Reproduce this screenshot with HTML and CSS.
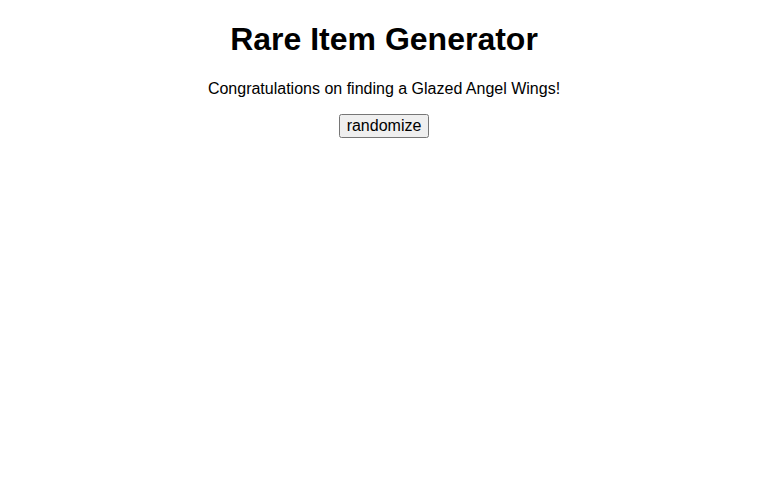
FILE: index.html
```html
<!DOCTYPE html>
<html lang="en">
<head>
  <meta charset="UTF-8" />
  <title>Rare Item Generator</title>
  <link rel="stylesheet" href="styles.css">
  <script src="script.js" defer></script>
</head>
<body>
  <h1>Rare Item Generator</h1>
  <p>Congratulations on finding a <span id="item">Glazed Angel Wings</span>!</p>
  <button id="randomize">randomize</button>
</body>
</html>
```

FILE: styles.css
```css
body {
  font-family: "Liberation Sans", Arial, sans-serif;
  text-align: center;
  color: #000;
  background: #fff;
  margin: 0;
  padding: 0 8px 8px;
}

h1 {
  font-size: 32px;
  margin: 21px 0 22px;
}

p {
  margin: 16px 0;
}

button {
  font-family: "Liberation Sans", Arial, sans-serif;
  font-size: 16px;
}
```

FILE: script.js
```js
const adjectives = ['Glazed', 'Cursed', 'Shiny', 'Ancient', 'Frozen', 'Golden'];
const nouns = ['Angel Wings', 'Dragon Scale', 'Moon Boots', 'Phoenix Feather', 'Crystal Sword'];

function pick(list) {
  return list[Math.floor(Math.random() * list.length)];
}

document.getElementById('randomize').addEventListener('click', function () {
  document.getElementById('item').textContent = pick(adjectives) + ' ' + pick(nouns);
});
```
